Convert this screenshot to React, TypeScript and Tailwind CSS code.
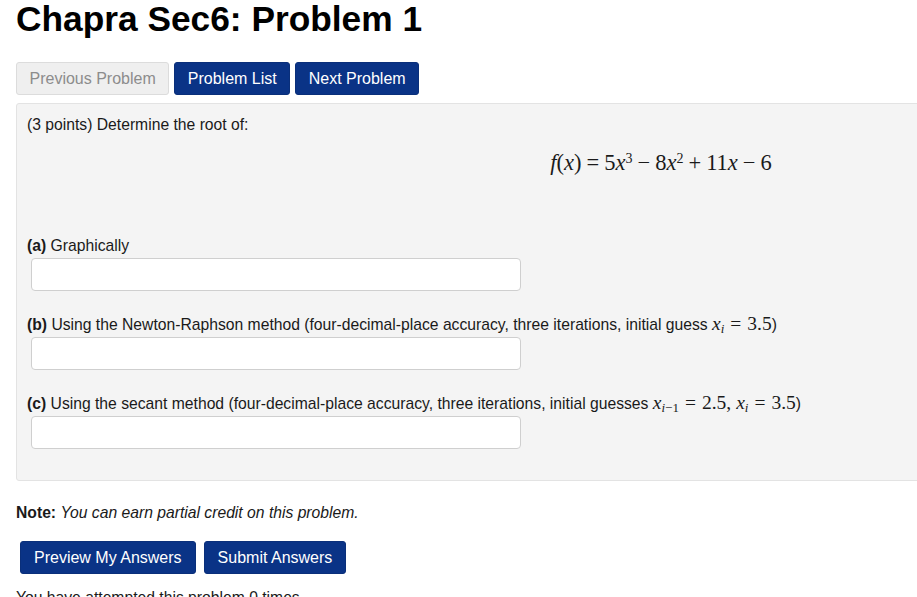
import React from "react";

const navy = "bg-[#0a3386] text-white border border-[#0a2f7a] rounded-[3px]";

function Op({ children, w = "mx-[5px]" }: { children: React.ReactNode; w?: string }) {
  return <span className={w}>{children}</span>;
}

function Mx({ children }: { children: React.ReactNode }) {
  return <span className="font-['Liberation_Serif',serif] text-[19.5px]">{children}</span>;
}

function AnswerBox() {
  return (
    <input
      type="text"
      className="mt-[2px] ml-1 block w-[490px] h-[33px] bg-white border border-[#cfcfcf] rounded-[4px] px-2 outline-none"
    />
  );
}

export default function App() {
  return (
    <div className="w-[917px] h-[597px] overflow-hidden bg-white font-['Liberation_Sans',Arial,sans-serif] text-[#1a1a1a]">
      <div className="pl-4 w-[1310px]">
        <h1 className="text-[35.3px] font-bold text-black leading-[38px] m-0">
          Chapra Sec6: Problem 1
        </h1>

        <div className="flex gap-[5px] mt-[24px]">
          <button className="h-[33px] px-[12.5px] bg-[#efefef] text-[#8c8c8c] border border-[#dcdcdc] rounded-[3px] text-[16px]">
            Previous Problem
          </button>
          <button className={`h-[33px] px-[12.5px] text-[16px] ${navy}`}>Problem List</button>
          <button className={`h-[33px] px-[12.5px] text-[16px] ${navy}`}>Next Problem</button>
        </div>

        <div className="mt-2 w-[1294px] h-[378px] bg-[#f4f4f4] border border-[#e3e3e3] rounded-[3px] pl-[10px] pt-[11px] text-[15.7px] leading-[20px]">
          <div>(3 points) Determine the root of:</div>
          <div className="flex justify-center mt-[14px] h-[28px] items-center">
            <span className="font-['Liberation_Serif',serif] text-[22.5px] ml-[-14px]">
              <i>f</i>(<i>x</i>)<Op>=</Op>5<i>x</i>
              <sup className="text-[14px]">3</sup>
              <Op>−</Op>8<i>x</i>
              <sup className="text-[14px]">2</sup>
              <Op>+</Op>11<i>x</i>
              <Op>−</Op>6
            </span>
          </div>

          <div className="mt-[59px]">
            <b>(a)</b> Graphically
          </div>
          <AnswerBox />

          <div className="mt-[23px]">
            <b>(b)</b> Using the Newton-Raphson method (four-decimal-place accuracy, three iterations, initial guess{" "}
            <Mx>
              <i>x</i>
              <sub className="text-[13px]"><i>i</i></sub>
              <Op w="mx-[6px]">=</Op>3.5
            </Mx>
            )
          </div>
          <AnswerBox />

          <div className="mt-[23px]">
            <b>(c)</b> Using the secant method (four-decimal-place accuracy, three iterations, initial guesses{" "}
            <Mx>
              <i>x</i>
              <sub className="text-[13px]"><i>i</i>−1</sub>
              <Op w="mx-[6px]">=</Op>2.5,<span className="ml-[5px]"><i>x</i></span>
              <sub className="text-[13px]"><i>i</i></sub>
              <Op w="mx-[6px]">=</Op>3.5
            </Mx>
            )
          </div>
          <AnswerBox />
        </div>

        <div className="mt-[22px] text-[15.7px] leading-[20px]">
          <b>Note:</b> <i>You can earn partial credit on this problem.</i>
        </div>

        <div className="flex gap-2 mt-[18px] ml-1">
          <button className={`h-[33px] px-[13px] text-[16px] ${navy}`}>Preview My Answers</button>
          <button className={`h-[33px] px-[13px] text-[16px] ${navy}`}>Submit Answers</button>
        </div>

        <div className="mt-[14px] text-[15.7px] leading-[20px]">You have attempted this problem 0 times.</div>
      </div>
    </div>
  );
}
